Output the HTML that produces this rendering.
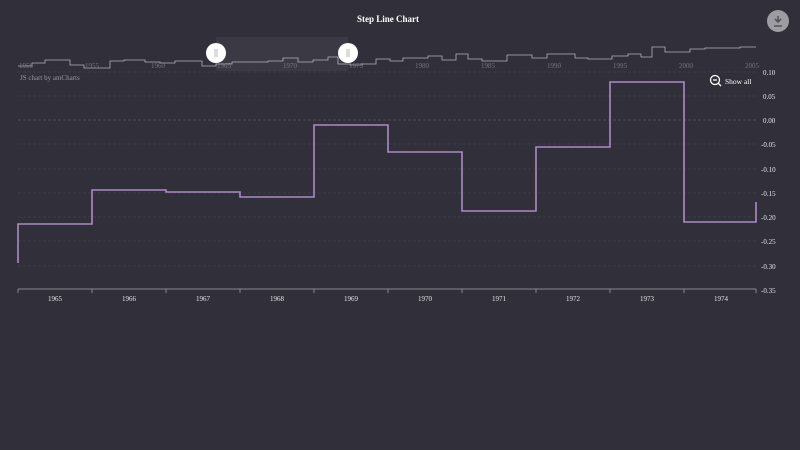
<html><head><style>
body{margin:0;background:#302f3a;width:800px;height:450px;overflow:hidden;font-family:"Liberation Serif",serif}
</style></head><body>
<svg width="800" height="450" xmlns="http://www.w3.org/2000/svg" font-family="Liberation Serif, serif">
<rect width="800" height="450" fill="#302f3a"/>
<text x="388" y="22" fill="#fff" font-size="9" font-weight="bold" text-anchor="middle">Step Line Chart</text>
<circle cx="778" cy="21" r="11" fill="#9d9ca3"/>
<path d="M778 16v6m-3-3l3 3 3-3M774 26h8" stroke="#555" stroke-width="1.6" fill="none"/>
<rect x="216" y="37" width="132" height="34" fill="#3a3944"/>
<path d="M18 66H32V63H45V60H70V65H84V68H110V61H124V60H145V62H160V63H175V61H202V66H216V64H232V62H268V61H283V58H298V62H313V60H328V57H338V64H350V65H362V64H376V59H390V61H403V58H428V56H442V60H456V54H468V59H482V61H507V55H532V58H547V54H575V58H588V59H612V56H628V54H641V57H652V47H665V52H690V49H705V48H740V47H756" stroke="#b5b4bb" stroke-width=".8" fill="none"/>
<g fill="#77767e" font-size="7" text-anchor="middle">
<text x="26" y="68">1950</text><text x="92" y="68">1955</text><text x="158" y="68">1960</text><text x="224" y="68">1965</text><text x="290" y="68">1970</text><text x="356" y="68">1975</text><text x="422" y="68">1980</text><text x="488" y="68">1985</text><text x="554" y="68">1990</text><text x="620" y="68">1995</text><text x="686" y="68">2000</text><text x="752" y="68">2005</text></g>
<circle cx="216" cy="53" r="10" fill="#fff"/><path d="M215 49v8M217 49v8" stroke="#aaa" stroke-width=".8"/>
<circle cx="348" cy="53" r="10" fill="#fff"/><path d="M347 49v8M349 49v8" stroke="#aaa" stroke-width=".8"/>
<text x="20" y="80" fill="#9a99a0" font-size="7">JS chart by amCharts</text>
<circle cx="715" cy="80" r="4.5" stroke="#fff" stroke-width="1.3" fill="none"/><path d="M713 80h4M718 83l3 3" stroke="#fff" stroke-width="1.3"/>
<text x="725" y="84" fill="#fff" font-size="7.5">Show all</text>
<g stroke="#4a4953" stroke-width=".6" stroke-dasharray="3,2">
<path d="M18 72H756M18 96H756M18 144H756M18 169H756M18 193H756M18 217H756M18 241H756M18 266H756"/></g>
<path d="M18 120H756" stroke="#6a6973" stroke-width=".6" stroke-dasharray="3,2"/>
<g fill="#e6e6ea" font-size="7">
<text x="763" y="75">0.10</text><text x="763" y="99">0.05</text><text x="763" y="123">0.00</text><text x="761" y="147">-0.05</text><text x="761" y="172">-0.10</text><text x="761" y="196">-0.15</text><text x="761" y="220">-0.20</text><text x="761" y="244">-0.25</text><text x="761" y="269">-0.30</text><text x="761" y="293">-0.35</text></g>
<path d="M18 289H756" stroke="#8a8990" stroke-width="1"/>
<path d="M18 289v4M92 289v4M166 289v4M240 289v4M314 289v4M388 289v4M462 289v4M536 289v4M610 289v4M684 289v4M756 289v4" stroke="#8a8990"/>
<g fill="#e6e6ea" font-size="7" text-anchor="middle">
<text x="55" y="301">1965</text><text x="129" y="301">1966</text><text x="203" y="301">1967</text><text x="277" y="301">1968</text><text x="351" y="301">1969</text><text x="425" y="301">1970</text><text x="499" y="301">1971</text><text x="573" y="301">1972</text><text x="647" y="301">1973</text><text x="721" y="301">1974</text></g>
<path d="M18 263V224H92V190H166V192H240V197H314V125H388V152H462V211H536V147H610V82H684V222H756V202" stroke="#a98cc4" stroke-width="1.6" fill="none"/>
</svg>
</body></html>
